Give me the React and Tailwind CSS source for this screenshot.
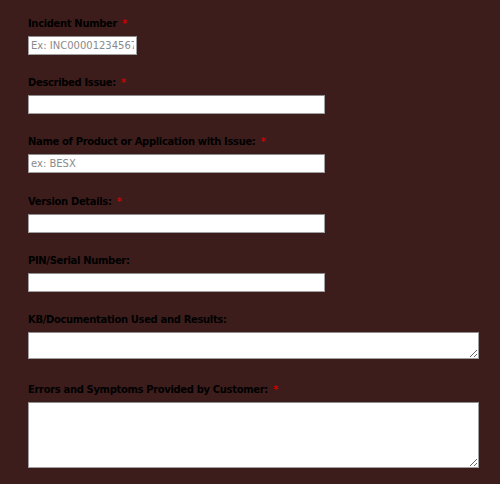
import React from 'react';

// incident intake form, all fields stacked in one column
const fields = [
  { label: 'Incident Number', required: true, type: 'input', width: 'w-[109px]', placeholder: 'Ex: INC000012345678' },
  { label: 'Described Issue:', required: true, type: 'input', width: 'w-[297px]' },
  { label: 'Name of Product or Application with Issue:', required: true, type: 'input', width: 'w-[297px]', placeholder: 'ex: BESX' },
  { label: 'Version Details:', required: true, type: 'input', width: 'w-[297px]' },
  { label: 'PIN/Serial Number:', required: false, type: 'input', width: 'w-[297px]' },
  { label: 'KB/Documentation Used and Results:', required: false, type: 'textarea', height: 'h-[27px]' },
  { label: 'Errors and Symptoms Provided by Customer:', required: true, type: 'textarea', height: 'h-[66px]' },
];

const Field = ({ field }) => (
  <div className={`flex flex-col ${field.type === 'input' ? 'mb-[21.4px]' : 'mb-[23.5px]'}`}>
    <label className="text-[10px] leading-[14px] font-bold tracking-[-0.35px] text-black">
      {field.label}
      {field.required && <span className="ml-[5px] text-[#cc0000]">*</span>}
    </label>
    {field.type === 'input' ? (
      <input
        type="text"
        placeholder={field.placeholder}
        className={`${field.width} h-[19px] mt-[5px] bg-white border border-[#a0a0a0] border-t-[#8c8c8c] px-[2px] text-[10px] text-black placeholder:text-[#8a8a8a] outline-none`}
      />
    ) : (
      <textarea
        className={`w-[451px] ${field.height} mt-[5px] bg-white border border-[#a0a0a0] border-t-[#8c8c8c] px-[2px] text-[10px] outline-none resize`}
      />
    )}
  </div>
);

export default function App() {
  return (
    <div className="min-h-screen bg-[#3c1d1c] pl-[28px] pt-[16.5px]" style={{ fontFamily: '"DejaVu Sans", Verdana, sans-serif' }}>
      {fields.map((f) => (
        <Field key={f.label} field={f} />
      ))}
    </div>
  );
}
